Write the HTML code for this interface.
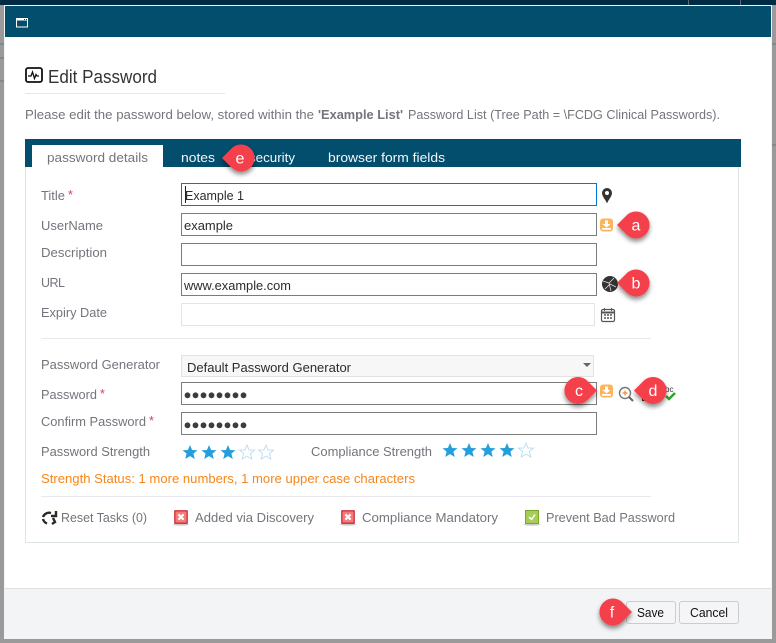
<!DOCTYPE html>
<html lang="en"><head><meta charset="utf-8"><title>Edit Password</title>
<style>
html,body{margin:0;padding:0;background:#999}
svg{display:block}
text{font-family:"Liberation Sans",sans-serif;font-size:12.5px;fill:#74757c}
.d{fill:#2c2c2c}
.w{fill:#f4f8fa}
.c{fill:#fff;font-size:16px}
.r{fill:#d93a6c}
</style></head><body>
<svg xmlns="http://www.w3.org/2000/svg" width="776" height="643" viewBox="0 0 776 643">
<defs>
<filter id="s" x="-30%" y="-30%" width="170%" height="170%"><feDropShadow dx="0" dy="3" stdDeviation="2.400" flood-color="#000" flood-opacity=".45"/></filter>
<path id="st" d="M0-7.500 2.100-2.500 7.500-2.300 3.400 1.100 4.800 6.500 0 3.600-4.800 6.500-3.400 1.100-7.500-2.300-2.100-2.500Z"/>
<path id="tr" d="M-19 0-9.500-9.500A13.500 13.500 0 1 1-9.500 9.500Z"/>
<g id="dl"><rect x="-6.500" y="-6.500" width="13" height="13" rx="3" fill="#fdb45c"/><path d="M-4-1H-1.500V-4.500H1.500V-1H4L0 2.500Z M-4.500 3H4.500V4.800H-4.500Z" fill="#fff"/></g>
<g id="x"><ellipse cx="0" cy="7.500" rx="8" ry="1.200" fill="#ccc"/><rect x="-6.200" y="-6.200" width="12.400" height="12.400" fill="#f47a7a" stroke="#c00010" stroke-width="1"/><path d="M-2.600-2.600 2.600 2.600M2.600-2.600-2.600 2.600" stroke="#fff" stroke-width="2.200"/></g>
</defs>
<rect width="776" height="643" fill="#9a9a9a"/>
<rect width="776" height="5" fill="#012b42"/>
<path d="M688.500 0V5M740.500 0V5" stroke="#667" stroke-width="1"/>
<path d="M771 44H776M0 44H4M0 58H4M0 81H4M771 145H776" stroke="#777" stroke-width="1"/>
<rect x="4" y="5" width="768" height="634" fill="#f0f4f5"/>
<rect x="5" y="6" width="766" height="632" fill="#fff"/>
<rect x="5" y="6" width="766" height="31" fill="#034d6d"/>
<rect x="16.500" y="18.500" width="11" height="8.500" fill="none" stroke="#fff" stroke-width="1"/><rect x="16" y="18" width="12" height="2.500" fill="#fff"/><path d="M24 19.500h1M26 19.500h1" stroke="#034d6d"/>

<rect x="26" y="68" width="16" height="14" rx="2" fill="none" stroke="#111" stroke-width="1.800"/>
<path d="M28 76h3l1.500-4 2 6.500 1.500-4 1 1.500h2" fill="none" stroke="#111" stroke-width="1.300"/>
<text x="48" y="83" style="font-size:18px;fill:#333" textLength="109" lengthAdjust="spacingAndGlyphs">Edit Password</text>
<rect x="25" y="93" width="200" height="1" fill="#e8e8e8"/>

<text x="25" y="119" textLength="289" lengthAdjust="spacingAndGlyphs">Please edit the password below, stored within the</text>
<text x="318" y="119" style="font-weight:bold" textLength="85" lengthAdjust="spacingAndGlyphs">'Example List'</text>
<text x="408" y="119" textLength="312" lengthAdjust="spacingAndGlyphs">Password List (Tree Path = \FCDG Clinical Passwords).</text>

<rect x="25.500" y="160.500" width="713" height="382" fill="#fff" stroke="#dfe5e7"/>
<rect x="25" y="139" width="716" height="28" fill="#034d6d"/>
<rect x="32" y="145" width="131" height="22" fill="#fff"/>
<text x="47" y="162" textLength="101" lengthAdjust="spacingAndGlyphs">password details</text>
<text class="w" x="181" y="162" textLength="34" lengthAdjust="spacingAndGlyphs">notes</text>
<text class="w" x="249" y="162" textLength="46" lengthAdjust="spacingAndGlyphs">security</text>
<text class="w" x="328" y="162" textLength="117" lengthAdjust="spacingAndGlyphs">browser form fields</text>

<text x="41" y="200" textLength="24" lengthAdjust="spacingAndGlyphs">Title</text><text class="r" x="68" y="199">*</text>
<text x="41" y="230" textLength="62" lengthAdjust="spacingAndGlyphs">UserName</text>
<text x="41" y="257" textLength="66" lengthAdjust="spacingAndGlyphs">Description</text>
<text x="41" y="287" textLength="24" lengthAdjust="spacing">URL</text>
<text x="41" y="317" textLength="66" lengthAdjust="spacingAndGlyphs">Expiry Date</text>
<text x="41" y="369" textLength="119" lengthAdjust="spacingAndGlyphs">Password Generator</text>
<text x="41" y="399" textLength="56" lengthAdjust="spacingAndGlyphs">Password</text><text class="r" x="100" y="398">*</text>
<text x="41" y="426" textLength="105" lengthAdjust="spacingAndGlyphs">Confirm Password</text><text class="r" x="149" y="425">*</text>
<text x="41" y="456" textLength="109" lengthAdjust="spacingAndGlyphs">Password Strength</text>
<text x="311" y="456" textLength="121" lengthAdjust="spacingAndGlyphs">Compliance Strength</text>

<g fill="#fff" stroke="#7c7c7c">
<rect x="181.500" y="183.500" width="415" height="22" stroke="#0078d7"/>
<rect x="181.500" y="213.500" width="415" height="22"/>
<rect x="181.500" y="243.500" width="415" height="22"/>
<rect x="181.500" y="273.500" width="415" height="22"/>
<rect x="181.500" y="303.500" width="413" height="22" stroke="#e4e4e4"/>
<rect x="181.500" y="355.500" width="412" height="21" fill="#f7f7f7" stroke="#e3e3e3"/>
<rect x="181.500" y="382.500" width="415" height="22"/>
<rect x="181.500" y="412.500" width="415" height="22"/>
</g>
<path d="M583 363h8l-4 4Z" fill="#666"/>
<rect x="185" y="186" width="1" height="17" fill="#222"/>
<text class="d" x="185" y="200" textLength="59" lengthAdjust="spacingAndGlyphs">Example 1</text>
<text class="d" x="184" y="230" textLength="49" lengthAdjust="spacingAndGlyphs">example</text>
<text class="d" x="184" y="290" textLength="107" lengthAdjust="spacingAndGlyphs">www.example.com</text>
<text class="d" x="187" y="372" textLength="164" lengthAdjust="spacingAndGlyphs">Default Password Generator</text>
<g fill="#3c3c3c"><circle cx="187.500" cy="395.300" r="2.900"/><circle cx="195.500" cy="395.300" r="2.900"/><circle cx="203.500" cy="395.300" r="2.900"/><circle cx="211.500" cy="395.300" r="2.900"/><circle cx="219.500" cy="395.300" r="2.900"/><circle cx="227.500" cy="395.300" r="2.900"/><circle cx="235.500" cy="395.300" r="2.900"/><circle cx="243.500" cy="395.300" r="2.900"/>
<circle cx="187.500" cy="425.300" r="2.900"/><circle cx="195.500" cy="425.300" r="2.900"/><circle cx="203.500" cy="425.300" r="2.900"/><circle cx="211.500" cy="425.300" r="2.900"/><circle cx="219.500" cy="425.300" r="2.900"/><circle cx="227.500" cy="425.300" r="2.900"/><circle cx="235.500" cy="425.300" r="2.900"/><circle cx="243.500" cy="425.300" r="2.900"/></g>

<path d="M607 188a5 5 0 0 0-5 5c0 3.500 3.500 6.500 5 10.500 1.500-4 5-7 5-10.500a5 5 0 0 0-5-5Zm0 3a2 2 0 1 1 0 4 2 2 0 0 1 0-4Z" fill="#333" fill-rule="evenodd"/>
<use href="#dl" x="606.500" y="225"/>
<circle cx="610" cy="284" r="8" fill="#333"/><path d="M603 281l6 2 5-5M605 289l5-5 6 3M609 283l2 8" stroke="#ddd" fill="none" stroke-width=".8"/>
<rect x="601.500" y="309.500" width="13" height="12" rx="1.500" fill="#fff" stroke="#555" stroke-width="1.200"/><path d="M601.500 312.500h13" stroke="#555" stroke-width="2"/><path d="M604.500 308v3M611.500 308v3" stroke="#555"/><path d="M604 315h2M607 315h2M610 315h2M604 318h2M607 318h2M610 318h2" stroke="#555" stroke-width="1.500"/>
<use href="#dl" x="606.500" y="391"/>
<circle cx="625" cy="393" r="5.500" fill="#fff" stroke="#777" stroke-width="1.400"/><path d="M622.500 393h5M625 390.500v5" stroke="#f08a24" stroke-width="1.200"/><path d="M629 397l4 4" stroke="#666" stroke-width="2"/>
<rect x="642" y="393" width="7" height="8" fill="#333"/>
<text x="665" y="392" style="font-size:8px;fill:#333">bc</text>
<path d="M666 396l3 3 6-6" fill="none" stroke="#2fa32f" stroke-width="2.500"/>

<g fill="#259fdc"><use href="#st" x="190" y="452.500"/><use href="#st" x="209" y="452.500"/><use href="#st" x="228" y="452.500"/><use href="#st" x="450" y="450.500"/><use href="#st" x="469" y="450.500"/><use href="#st" x="488" y="450.500"/><use href="#st" x="507" y="450.500"/></g>
<g fill="#fff" stroke="#bcdcee" stroke-width=".9"><use href="#st" x="247" y="452.500"/><use href="#st" x="266" y="452.500"/><use href="#st" x="526" y="450.500"/></g>

<text x="41" y="483" style="fill:#f7861b" textLength="374" lengthAdjust="spacingAndGlyphs">Strength Status: 1 more numbers, 1 more upper case characters</text>
<rect x="41" y="338" width="610" height="1" fill="#e8e8ee"/>
<rect x="41" y="496" width="610" height="1" fill="#e8e8ee"/>

<g fill="none" stroke="#2a2a2a" stroke-width="2.400"><path d="M43 517a6.500 6.500 0 0 1 8-4M56 511v5h-5M43 519a6.500 6.500 0 0 0 4 4.500M53 518l2 4-3 2"/></g>
<text x="61" y="522" textLength="86" lengthAdjust="spacingAndGlyphs">Reset Tasks (0)</text>
<use href="#x" x="181" y="517"/>
<text x="195" y="522" textLength="119" lengthAdjust="spacingAndGlyphs">Added via Discovery</text>
<use href="#x" x="348" y="517"/>
<text x="362" y="522" textLength="136" lengthAdjust="spacingAndGlyphs">Compliance Mandatory</text>
<ellipse cx="532" cy="524.500" rx="8" ry="1.200" fill="#ccc"/><rect x="525.500" y="510.500" width="13" height="13" fill="#a8cc58" stroke="#79a82c"/><path d="M529 517l2.500 2.500 3.500-5" fill="none" stroke="#fff" stroke-width="1.500"/>
<text x="546" y="522" textLength="129" lengthAdjust="spacingAndGlyphs">Prevent Bad Password</text>

<rect x="5" y="588" width="766" height="50" fill="#f3f4f6"/>
<rect x="5" y="588" width="766" height="1" fill="#dde1e4"/>
<rect x="626.500" y="601.500" width="49" height="22" rx="2.500" fill="#f5f5f7" stroke="#ccc"/>
<rect x="679.500" y="601.500" width="59" height="22" rx="2.500" fill="#f5f5f7" stroke="#ccc"/>
<text class="d" x="637" y="617" style="fill:#111" textLength="27" lengthAdjust="spacingAndGlyphs">Save</text>
<text class="d" x="690" y="617" style="fill:#111" textLength="38" lengthAdjust="spacingAndGlyphs">Cancel</text>

<g fill="#f4414b" filter="url(#s)">
<use href="#tr" x="636" y="225"/>
<use href="#tr" x="636" y="283"/>
<use href="#tr" transform="translate(578 390.500) scale(-1 1)"/>
<use href="#tr" x="653" y="390.500"/>
<use href="#tr" x="241" y="158"/>
<use href="#tr" transform="translate(613 612) scale(-1 1)"/>
</g>
<text class="c" x="636" y="230.500" text-anchor="middle">a</text>
<text class="c" x="636" y="288.500" text-anchor="middle">b</text>
<text class="c" x="579" y="396" text-anchor="middle">c</text>
<text class="c" x="653" y="396" text-anchor="middle">d</text>
<text class="c" x="240" y="163.500" text-anchor="middle">e</text>
<text class="c" x="612" y="617.500" text-anchor="middle">f</text>
</svg>
</body></html>
